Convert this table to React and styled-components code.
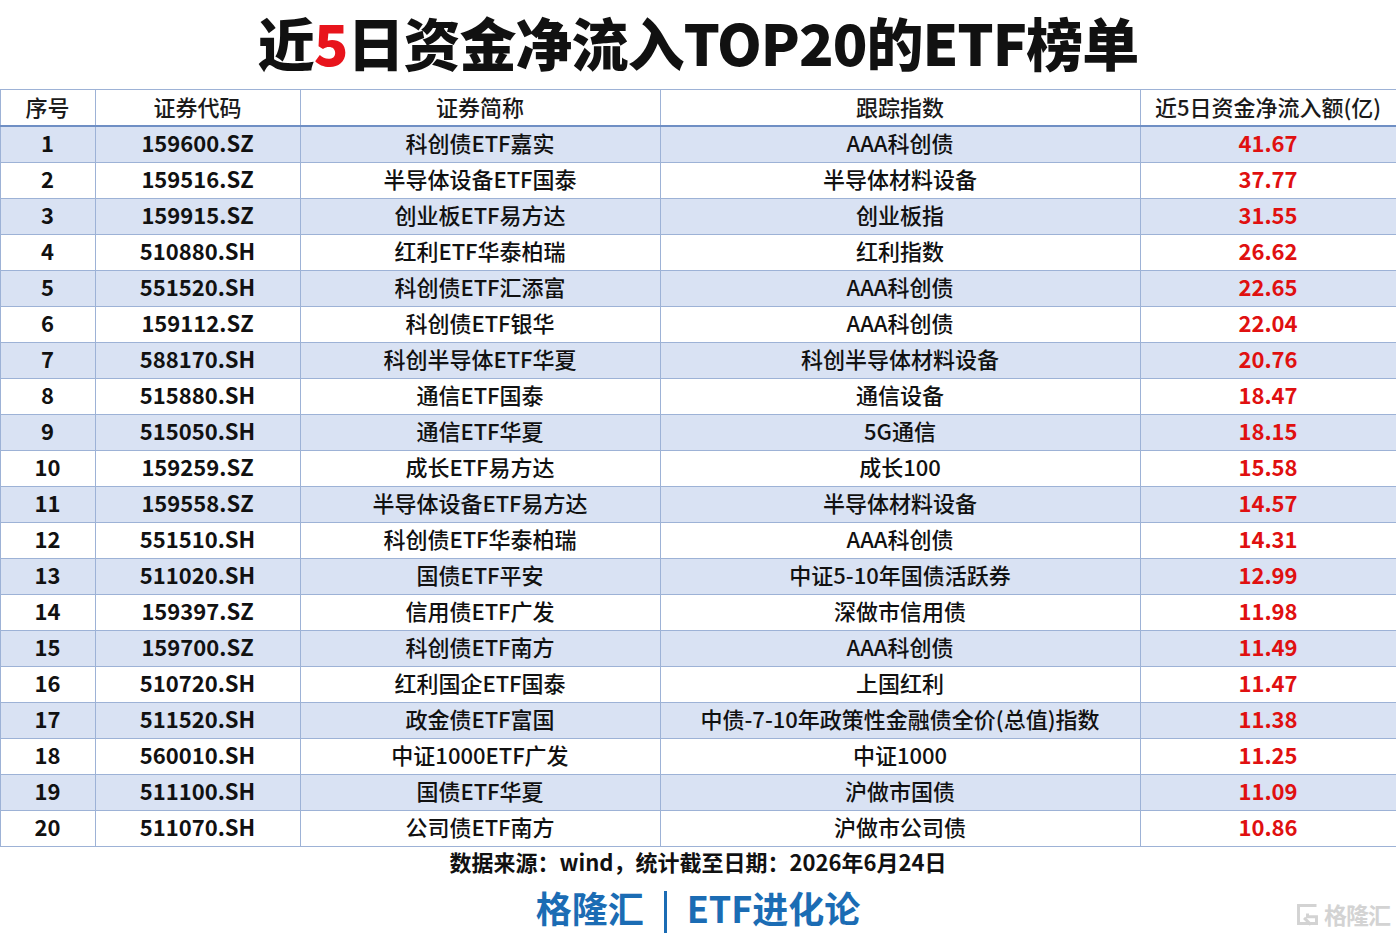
import styled, { createGlobalStyle } from 'styled-components';

const GlobalStyle = createGlobalStyle`
  html, body {
    margin: 0;
    padding: 0;
    background: #fff;
  }
  body {
    font-family: "Noto Sans CJK SC", "Noto Sans", sans-serif;
    color: #111;
  }
`;

const rows = [
  ['1', '159600.SZ', '科创债ETF嘉实', 'AAA科创债', '41.67'],
  ['2', '159516.SZ', '半导体设备ETF国泰', '半导体材料设备', '37.77'],
  ['3', '159915.SZ', '创业板ETF易方达', '创业板指', '31.55'],
  ['4', '510880.SH', '红利ETF华泰柏瑞', '红利指数', '26.62'],
  ['5', '551520.SH', '科创债ETF汇添富', 'AAA科创债', '22.65'],
  ['6', '159112.SZ', '科创债ETF银华', 'AAA科创债', '22.04'],
  ['7', '588170.SH', '科创半导体ETF华夏', '科创半导体材料设备', '20.76'],
  ['8', '515880.SH', '通信ETF国泰', '通信设备', '18.47'],
  ['9', '515050.SH', '通信ETF华夏', '5G通信', '18.15'],
  ['10', '159259.SZ', '成长ETF易方达', '成长100', '15.58'],
  ['11', '159558.SZ', '半导体设备ETF易方达', '半导体材料设备', '14.57'],
  ['12', '551510.SH', '科创债ETF华泰柏瑞', 'AAA科创债', '14.31'],
  ['13', '511020.SH', '国债ETF平安', '中证5-10年国债活跃券', '12.99'],
  ['14', '159397.SZ', '信用债ETF广发', '深做市信用债', '11.98'],
  ['15', '159700.SZ', '科创债ETF南方', 'AAA科创债', '11.49'],
  ['16', '510720.SH', '红利国企ETF国泰', '上国红利', '11.47'],
  ['17', '511520.SH', '政金债ETF富国', '中债-7-10年政策性金融债全价(总值)指数', '11.38'],
  ['18', '560010.SH', '中证1000ETF广发', '中证1000', '11.25'],
  ['19', '511100.SH', '国债ETF华夏', '沪做市国债', '11.09'],
  ['20', '511070.SH', '公司债ETF南方', '沪做市公司债', '10.86'],
];

const columns = [
  { label: '序号', width: 95 },
  { label: '证券代码', width: 205 },
  { label: '证券简称', width: 360 },
  { label: '跟踪指数', width: 480 },
  { label: '近5日资金净流入额(亿)', width: 256 },
];

const Page = styled.div`
  width: 1396px;
  height: 941px;
  display: flex;
  flex-direction: column;
  align-items: center;
  position: relative;
  overflow: hidden;
  & > * {
    flex-shrink: 0;
  }
`;

const Title = styled.h1`
  margin: 0;
  height: 89px;
  display: flex;
  align-items: center;
  justify-content: center;
  font-size: 57px;
  font-weight: 900;
  letter-spacing: -1px;
  color: #111;
  line-height: 1;
  padding-bottom: 6px;
  box-sizing: border-box;
`;

const Red = styled.span`
  color: #e8141c;
`;

const Table = styled.table`
  width: 1396px;
  border-collapse: collapse;
  table-layout: fixed;
  font-size: 22px;
  line-height: 1;
`;

const HeadCell = styled.th`
  height: 31px;
  padding: 0 0 4px;
  font-weight: 500;
  color: #1a1a1a;
  border: 1px solid #9db2d6;
  border-bottom: 2px solid #6f8fc4;
  text-align: center;
  white-space: nowrap;
`;

const Row = styled.tr`
  background: ${(p) => (p.$shaded ? '#d9e2f3' : '#fff')};
`;

const Cell = styled.td`
  height: 30px;
  padding: 0 0 5px;
  border: 1px solid #9db2d6;
  text-align: center;
  white-space: nowrap;
  font-weight: ${(p) => (p.$num ? 700 : 500)};
  color: ${(p) => (p.$red ? '#e01010' : '#111')};
`;

const Source = styled.div`
  margin-top: 0;
  font-size: 22px;
  font-weight: 700;
  color: #111;
  line-height: 28px;
`;

const Brand = styled.div`
  margin-top: 6px;
  display: flex;
  align-items: center;
  gap: 20px;
  font-size: 36px;
  font-weight: 700;
  color: #1b6cb4;
  line-height: 1;
`;

const Divider = styled.span`
  width: 3px;
  height: 42px;
  background: #1b6cb4;
  margin-top: 10px;
`;

const Watermark = styled.div`
  position: absolute;
  right: 6px;
  bottom: 10px;
  display: flex;
  align-items: center;
  gap: 3px;
  color: #d3d3d3;
  font-size: 23px;
  font-weight: 700;
  letter-spacing: -1px;
`;

function WatermarkLogo() {
  return (
    <svg width="27" height="27" viewBox="0 0 24 24" fill="none" stroke="#d3d3d3" strokeWidth="2.6">
      <path d="M20 4H4v16h16v-6h-8v-3" />
      <path d="M9 15l6 6" />
    </svg>
  );
}

export default function App() {
  return (
    <>
      <GlobalStyle />
      <Page>
        <Title>
          近<Red>5</Red>日资金净流入TOP20的ETF榜单
        </Title>
        <Table>
          <colgroup>
            {columns.map((c) => (
              <col key={c.label} style={{ width: c.width }} />
            ))}
          </colgroup>
          <thead>
            <tr>
              {columns.map((c) => (
                <HeadCell key={c.label}>{c.label}</HeadCell>
              ))}
            </tr>
          </thead>
          <tbody>
            {rows.map((r, i) => (
              <Row key={r[0]} $shaded={i % 2 === 0}>
                <Cell $num>{r[0]}</Cell>
                <Cell $num>{r[1]}</Cell>
                <Cell>{r[2]}</Cell>
                <Cell>{r[3]}</Cell>
                <Cell $num $red>{r[4]}</Cell>
              </Row>
            ))}
          </tbody>
        </Table>
        <Source>数据来源：wind，统计截至日期：2026年6月24日</Source>
        <Brand>
          <span>格隆汇</span>
          <Divider />
          <span>ETF进化论</span>
        </Brand>
        <Watermark>
          <WatermarkLogo />
          <span>格隆汇</span>
        </Watermark>
      </Page>
    </>
  );
}
